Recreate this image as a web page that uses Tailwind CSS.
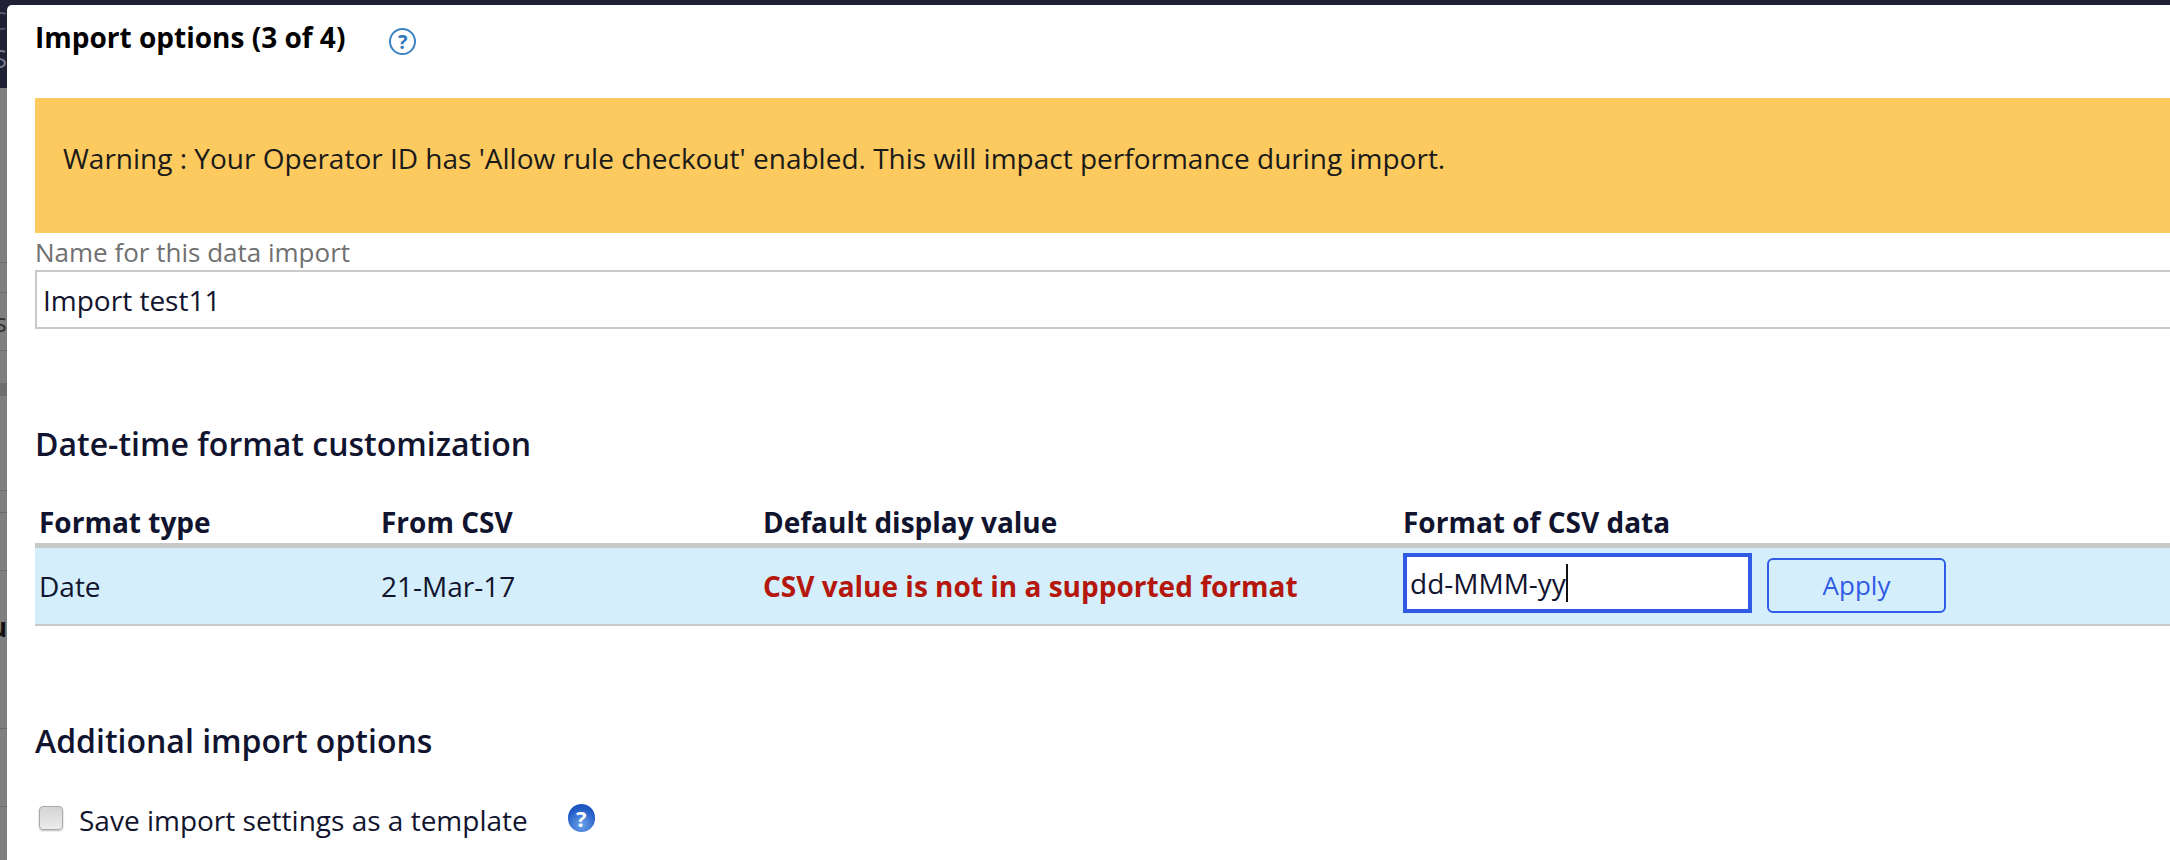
<!DOCTYPE html>
<html lang="en">

<head>
    <meta charset="UTF-8">
    <meta name="viewport" content="width=device-width, initial-scale=1.0">
    <script src="https://cdn.jsdelivr.net/npm/@tailwindcss/browser@4"></script>
    <title>Import options</title>
</head>

<body class="bg-[#1f2033] font-['Open_Sans',sans-serif]">
    <div class="flex h-[860px] w-[2170px] flex-col overflow-hidden">
        <!-- Top edge of the page behind the modal -->
        <div class="h-[5px] shrink-0 bg-[#1f2033]"></div>

        <div class="flex min-h-0 flex-1">
            <!-- Sliver of the page behind the modal -->
            <div class="flex w-[7px] shrink-0 flex-col overflow-hidden bg-[#7f7f7f] text-[26px] leading-none">
                <div class="flex h-[83px] flex-col items-end overflow-hidden bg-[#1f2033] text-[#77778a]">
                    <span class="h-[40px] whitespace-nowrap pt-[2px] text-[#55566a]">C</span>
                    <span class="whitespace-nowrap">S</span>
                </div>
                <div class="h-[175px] border-b border-[#6a6a6a]"></div>
                <div class="h-[30px] border-b border-[#6a6a6a]"></div>
                <div class="flex h-[58px] items-center justify-end overflow-hidden border-b border-[#6a6a6a] text-[#333]">s</div>
                <div class="h-[32px]"></div>
                <div class="h-[13px] bg-[#6e6e6e]"></div>
                <div class="h-[95px] border-b border-[#6a6a6a]"></div>
                <div class="h-[22px] border-b border-[#6a6a6a]"></div>
                <div class="h-[58px] border-b border-[#6a6a6a]"></div>
                <div class="flex h-[158px] items-end justify-end overflow-hidden border-b border-[#6a6a6a] pb-[88px] font-bold text-[#111]">u</div>
                <div class="h-[78px] border-b border-[#6a6a6a]"></div>
                <div class="flex-1"></div>
            </div>

            <!-- Modal -->
            <div class="min-w-0 flex-1 overflow-hidden rounded-tl-[5px] bg-white pl-[28px] text-[#11142e]">
                <div class="flex h-[93px] items-start pt-[13px]">
                    <h1 class="text-[28px] font-bold leading-[38px] text-black">Import options (3 of 4)</h1>
                    <span class="ml-[44px] mt-[10px] flex h-[27px] w-[27px] items-center justify-center rounded-full border-2 border-[#3b82c4] text-[20px] font-bold leading-none text-[#2f78bd]">?</span>
                </div>

                <div class="flex h-[135px] items-center bg-[#fdca5f] pb-[16px] pl-[28px] text-[28px] text-[#1a1a1a]">
                    Warning : Your Operator ID has 'Allow rule checkout' enabled. This will impact performance during import.
                </div>

                <label class="block h-[37px] text-[26px] leading-[38px] text-[#707070]">Name for this data import</label>
                <div class="-mr-[4px] flex h-[59px] items-center border-2 border-[#c9c9c9] pl-[6px] text-[28px]">Import test11</div>

                <h2 class="mt-[90px] text-[32px] font-semibold leading-[50px]">Date-time format customization</h2>

                <table class="mt-[32px] w-full table-fixed border-collapse text-left">
                    <thead>
                        <tr class="h-[44px] border-b-[5px] border-[#c9c9c9] text-[28px]">
                            <th class="w-[342px] px-[4px] font-bold">Format type</th>
                            <th class="w-[382px] px-[4px] font-bold">From CSV</th>
                            <th class="w-[640px] px-[4px] font-bold">Default display value</th>
                            <th class="px-[4px] font-bold">Format of CSV data</th>
                        </tr>
                    </thead>
                    <tbody>
                        <tr class="h-[79px] border-b-2 border-[#c9c9c9] bg-[#d4effb] text-[28px]">
                            <td class="px-[4px]">Date</td>
                            <td class="px-[4px]">21-Mar-17</td>
                            <td class="px-[4px] font-bold text-[#b5170c]">CSV value is not in a supported format</td>
                            <td class="px-[4px]">
                                <div class="mb-[6px] flex items-center gap-[15px]">
                                    <div class="flex h-[60px] w-[349px] items-center border-[4px] border-[#2f5be7] bg-white pl-[3px]">
                                        <span class="h-[38px] border-r-2 border-[#111] leading-[38px]">dd-MMM-yy</span>
                                    </div>
                                    <button type="button" class="mt-[5px] h-[55px] w-[179px] rounded-[6px] border-2 border-[#2f5be7] text-[26px] text-[#2f5be7]">Apply</button>
                                </div>
                            </td>
                        </tr>
                    </tbody>
                </table>

                <h2 class="mt-[90px] text-[32px] font-semibold leading-[50px]">Additional import options</h2>

                <div class="mt-[33px] flex items-center pl-[4px]">
                    <input type="checkbox" class="-mt-[3px] h-[24px] w-[24px] appearance-none rounded-[4px] border border-[#a9a9a9] bg-gradient-to-b from-[#d4d4d4] to-[#ececec] shadow-[0_1px_2px_#bbb]">
                    <span class="ml-[16px] text-[28px]">Save import settings as a template</span>
                    <span class="ml-[40px] -mt-[4px] flex h-[28px] w-[27px] items-center justify-center rounded-full bg-[radial-gradient(circle_at_50%_75%,#6aa4ea,#1e56c4_70%)] text-[22px] font-bold leading-none text-white">?</span>
                </div>
            </div>
        </div>
    </div>
</body>

</html>
